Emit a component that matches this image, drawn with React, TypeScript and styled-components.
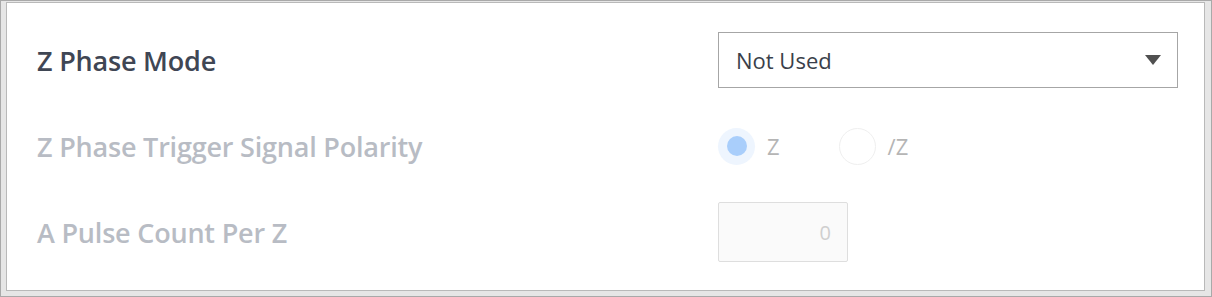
import React from "react";
import styled, { createGlobalStyle } from "styled-components";

const Global = createGlobalStyle`
  html, body { margin: 0; padding: 0; background: #ffffff; }
  body { font-family: "Open Sans", "Noto Sans", sans-serif; }
  * { box-sizing: border-box; }
`;

const Frame = styled.div`
  width: 1212px;
  height: 297px;
  border: 1px solid #a9a9a9;
  background: #e6e6e6;
  padding: 1px 6px 5px 5px;
  display: flex;
`;

const Panel = styled.div`
  flex: 1;
  background: #ffffff;
  border: 1px solid #b9b9b9;
  padding: 29px 26px 0 30px;
  display: grid;
  grid-template-columns: 681px 460px;
  grid-auto-rows: 56px;
  row-gap: 30px;
  align-items: center;
`;

const Label = styled.div<{ $disabled?: boolean }>`
  font-family: "Open Sans", "Noto Sans", sans-serif;
  font-weight: 600;
  font-size: 27px;
  letter-spacing: -0.2px;
  color: ${(p) => (p.$disabled ? "#b8bcc4" : "#3f4654")};
`;

const Select = styled.div`
  height: 56px;
  border: 1px solid #a6a6a6;
  display: flex;
  align-items: center;
  justify-content: space-between;
  padding: 0 16px 0 17px;
  font-size: 22px;
  color: #3a3f4a;
`;

const Caret = styled.span`
  width: 0;
  height: 0;
  border-left: 8px solid transparent;
  border-right: 8px solid transparent;
  border-top: 10px solid #505050;
`;

const RadioGroup = styled.div`
  display: flex;
  align-items: center;
  gap: 59px;
`;

const RadioItem = styled.div`
  display: flex;
  align-items: center;
  gap: 12px;
  font-size: 22px;
  color: #b5b5b5;
`;

const RadioCircle = styled.span<{ $checked?: boolean }>`
  width: 37px;
  height: 37px;
  border-radius: 50%;
  display: flex;
  align-items: center;
  justify-content: center;
  background: ${(p) => (p.$checked ? "#eef5fe" : "#ffffff")};
  border: ${(p) => (p.$checked ? "none" : "1.5px solid #efefef")};
  &::after {
    content: "";
    width: 20px;
    height: 20px;
    border-radius: 50%;
    background: #a9cefb;
    display: ${(p) => (p.$checked ? "block" : "none")};
  }
`;

const NumberBox = styled.div`
  width: 130px;
  height: 60px;
  background: #fafafa;
  border: 1.5px solid #dedede;
  border-radius: 2px;
  display: flex;
  align-items: center;
  justify-content: flex-end;
  padding-right: 16px;
  font-size: 20px;
  color: #cfcfcf;
`;

export default function App() {
  return (
    <>
      <Global />
      <Frame>
        <Panel>
          <Label>Z Phase Mode</Label>
          <Select>
            <span>Not Used</span>
            <Caret />
          </Select>

          <Label $disabled>Z Phase Trigger Signal Polarity</Label>
          <RadioGroup>
            <RadioItem>
              <RadioCircle $checked />
              <span>Z</span>
            </RadioItem>
            <RadioItem>
              <RadioCircle />
              <span>/Z</span>
            </RadioItem>
          </RadioGroup>

          <Label $disabled>A Pulse Count Per Z</Label>
          <div>
            <NumberBox>0</NumberBox>
          </div>
        </Panel>
      </Frame>
    </>
  );
}
